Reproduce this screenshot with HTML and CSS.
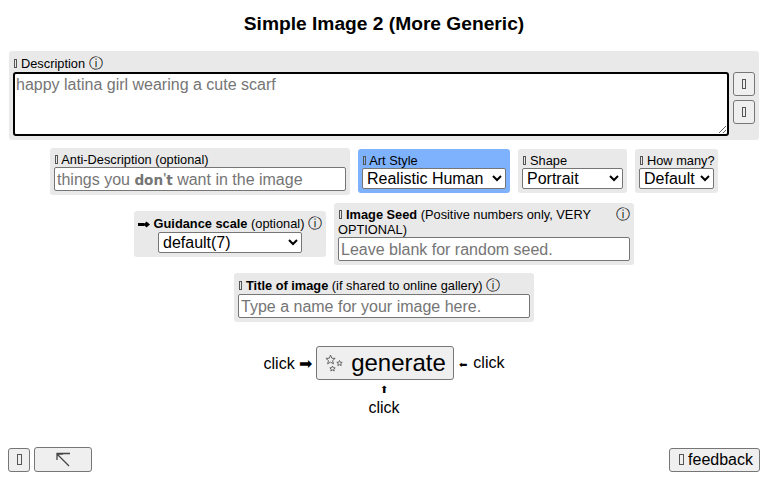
FILE: index.html
```html
<!DOCTYPE html>
<html lang="en">
<head>
    <meta charset="UTF-8">
    <meta name="viewport" content="width=device-width, initial-scale=1.0">
    <title>Simple Image 2 (More Generic)</title>
    <link rel="stylesheet" href="styles.css">
</head>
<body>
    <h1 class="page-title">Simple Image 2 (More Generic)</h1>

    <div class="panel description-panel">
        <div class="description-main">
            <label class="field-label info-label" for="description"><span class="tofu"></span> Description <span class="info">ⓘ</span></label>
            <textarea id="description" class="description-input" placeholder="happy latina girl wearing a cute scarf"></textarea>
        </div>
        <div class="description-tools">
            <button class="tool-button"><span class="tofu"></span></button>
            <button class="tool-button"><span class="tofu"></span></button>
        </div>
    </div>

    <div class="row row-options">
        <div class="panel anti-panel">
            <label class="field-label"><span class="tofu"></span> Anti-Description (optional)</label>
            <div class="text-input anti-input">things you <b>don</b>'<b>t</b> want in the image</div>
        </div>
        <div class="panel short-panel style-panel">
            <label class="field-label" for="style"><span class="tofu"></span> Art Style</label>
            <select id="style" class="select-input style-select"><option>Realistic Human | Photo</option></select>
        </div>
        <div class="panel short-panel">
            <label class="field-label" for="shape"><span class="tofu"></span> Shape</label>
            <select id="shape" class="select-input shape-select"><option>Portrait</option></select>
        </div>
        <div class="panel short-panel count-panel">
            <label class="field-label" for="count"><span class="tofu"></span> How many?</label>
            <select id="count" class="select-input count-select"><option>Default</option></select>
        </div>
    </div>

    <div class="row">
        <div class="panel guidance-panel">
            <label class="field-label info-label" for="guidance">
                <svg class="guidance-icon" width="12" height="7" viewBox="0 0 12 7"><path d="M0 2h6.500v3H0z"/><path d="M8.500 0.500L12 3.500 8.500 6.500 5.500 3.500z"/></svg>
                <b>Guidance scale</b> (optional) <span class="info">ⓘ</span>
            </label>
            <select id="guidance" class="select-input guidance-select"><option>default(7)</option></select>
        </div>
        <div class="panel seed-panel">
            <div class="seed-label">
                <label class="field-label" for="seed"><span class="tofu"></span> <b>Image Seed</b> (Positive numbers only, VERY OPTIONAL)</label>
                <span class="info">ⓘ</span>
            </div>
            <input id="seed" class="text-input" type="text" placeholder="Leave blank for random seed.">
        </div>
    </div>

    <div class="row">
        <div class="panel title-panel">
            <label class="field-label info-label" for="title"><span class="tofu"></span> <b>Title of image</b> (if shared to online gallery) <span class="info">ⓘ</span></label>
            <input id="title" class="text-input" type="text" placeholder="Type a name for your image here.">
        </div>
    </div>

    <div class="generate-row">
        <span>click ➡</span>
        <button class="generate-button">
            <svg class="sparkle" width="20" height="20" viewBox="0 0 20 20" fill="none" stroke="#666" stroke-width="1">
                <path d="M6.500 2l1.300 3.200 3.400.2-2.600 2.200.9 3.300-3-1.800-2.900 1.800.9-3.300-2.600-2.200 3.400-.2z"/>
                <path d="M15.500 7.500l.8 1.800 1.900.1-1.500 1.300.5 1.900-1.700-1-1.700 1 .5-1.900-1.500-1.300 1.900-.1z"/>
                <path d="M8.500 13l.8 1.700 1.900.2-1.400 1.200.4 1.900-1.700-1-1.700 1 .4-1.900-1.400-1.200 1.900-.2z"/>
            </svg>
            generate
        </button>
        <span><span class="small-arrow left-arrow">⬅</span> click</span>
    </div>
    <div class="generate-hint">
        <span class="small-arrow">⬆</span>
        <span>click</span>
    </div>

    <div class="footer">
        <div class="footer-left">
            <button class="footer-button square-button"><span class="tofu"></span></button>
            <button class="footer-button wide-button">
                <svg class="corner-icon" width="16" height="16" viewBox="0 0 16 16" fill="none" stroke="#444" stroke-width="1.300"><path d="M1.500 1.500H15M2 2l12 12M2 8V2h6"/></svg>
            </button>
        </div>
        <button class="footer-button feedback-button"><span class="tofu"></span> feedback</button>
    </div>
</body>
</html>
```

FILE: styles.css
```css
body {
    font-family: "Liberation Sans", Arial, sans-serif;
    margin: 0;
    padding: 0 8px;
    height: 480px;
    box-sizing: border-box;
    overflow: hidden;
    background-color: white;
    color: black;
    display: flex;
    flex-direction: column;
}
.page-title {
    font-size: 19.2px;
    font-weight: bold;
    text-align: center;
    margin: 13px 0 16px;
    line-height: 22px;
}
/* box for an emoji with no font behind it */
.tofu {
    display: inline-block;
    box-sizing: border-box;
    width: 0.3em;
    height: 0.7em;
    margin-left: 0.05em;
    border: 1px solid #555;
}
.panel {
    background-color: #e9e9e9;
    border-radius: 3px;
    padding: 4px;
    display: flex;
    flex-direction: column;
    box-sizing: border-box;
}
.short-panel {
    margin-top: 1px;
}
.field-label {
    font-size: 12.8px;
    line-height: 15px;
    display: block;
}
.info-label {
    line-height: 17px;
}
.info {
    font-family: "DejaVu Sans", sans-serif;
    font-size: 14px;
    line-height: 15px;
    color: black;
}
.description-panel {
    flex-direction: row;
    gap: 4px;
    margin: 0 1px;
}
.description-main {
    flex: 1;
}
.description-input {
    display: block;
    width: 100%;
    height: 64px;
    box-sizing: border-box;
    border: 2px solid black;
    border-radius: 3px;
    padding: 2px 1px 0;
    font-family: inherit;
    font-size: 16px;
    outline: none;
}
.description-tools {
    display: flex;
    flex-direction: column;
    gap: 4px;
    padding-top: 17px;
}
.tool-button {
    width: 22px;
    height: 24px;
    padding: 0;
    font-family: inherit;
    font-size: 14px;
    background-color: #efefef;
    border: 1px solid #767676;
    border-radius: 3px;
}
.row {
    display: flex;
    justify-content: center;
    align-items: center;
    gap: 8px;
    margin-top: 8px;
}
.row-options {
    align-items: flex-start;
}
.text-input {
    font-family: inherit;
    font-size: 16px;
    border: 1px solid #767676;
    border-radius: 2px;
    padding: 2px 2px 0;
    height: 24px;
    box-sizing: border-box;
    width: 100%;
    outline: none;
    background-color: white;
}
.anti-input {
    color: #757575;
    line-height: 20px;
    white-space: nowrap;
}
.anti-input b {
    font-family: "DejaVu Sans", sans-serif;
    font-size: 13.6px;
}
.select-input {
    font-family: inherit;
    font-size: 16px;
    height: 21px;
    background-color: white;
    border: 1px solid #767676;
    border-radius: 2px;
}
.anti-panel {
    width: 300px;
}
.style-panel {
    background-color: #7fb2fd;
    width: 152px;
}
.style-select {
    width: 144px;
}
.shape-select {
    width: 101px;
}
.count-panel {
    width: 83px;
}
.count-panel .field-label {
    white-space: nowrap;
}
.count-select {
    width: 75px;
}
.guidance-panel {
    align-items: center;
    width: 192px;
}
.guidance-panel .field-label {
    white-space: nowrap;
}
.guidance-select {
    width: 144px;
}
.seed-panel {
    width: 300px;
}
.seed-label {
    display: flex;
    align-items: flex-start;
    justify-content: space-between;
    gap: 6px;
}
.title-panel {
    width: 300px;
}
.generate-row {
    display: flex;
    justify-content: center;
    align-items: center;
    gap: 4px;
    margin-top: 24px;
    font-size: 16px;
}
.generate-button {
    font-family: inherit;
    font-size: 24px;
    height: 34px;
    padding: 0 7px;
    background-color: #efefef;
    border: 1px solid #767676;
    border-radius: 3px;
    display: flex;
    align-items: center;
    gap: 7px;
}
.small-arrow {
    font-size: 10px;
    margin: 0 1px;
}
.left-arrow {
    margin-right: 2px;
}
.generate-hint {
    display: flex;
    flex-direction: column;
    align-items: center;
    font-size: 16px;
    line-height: 18px;
    margin-top: 1px;
}
.footer {
    display: flex;
    justify-content: space-between;
    align-items: flex-end;
    margin-top: auto;
    margin-bottom: 8px;
}
.footer-left {
    display: flex;
    align-items: flex-end;
    gap: 4px;
}
.footer-button {
    font-family: inherit;
    font-size: 16px;
    height: 24px;
    padding: 0 6px;
    background-color: #efefef;
    border: 1px solid #767676;
    border-radius: 3px;
}
.square-button {
    width: 22px;
    padding: 0;
}
.wide-button {
    width: 58px;
    height: 25px;
}
.corner-icon {
    display: block;
    margin: 1px auto 0;
}
.feedback-button {
    padding-left: 8px;
}
```
